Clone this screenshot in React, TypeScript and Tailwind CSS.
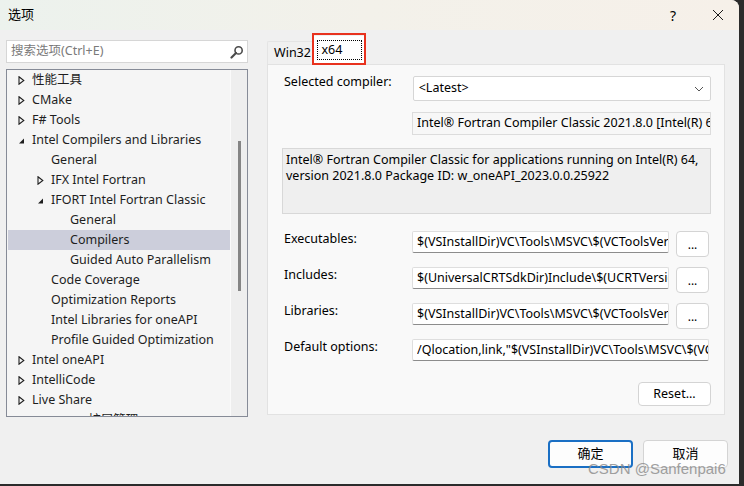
import React from 'react';

type Node = { t: string; lvl: number; ic?: 'c' | 'e'; sel?: boolean };

const tree: Node[] = [
    { t: '性能工具', lvl: 0, ic: 'c' },
    { t: 'CMake', lvl: 0, ic: 'c' },
    { t: 'F# Tools', lvl: 0, ic: 'c' },
    { t: 'Intel Compilers and Libraries', lvl: 0, ic: 'e' },
    { t: 'General', lvl: 1 },
    { t: 'IFX Intel Fortran', lvl: 1, ic: 'c' },
    { t: 'IFORT Intel Fortran Classic', lvl: 1, ic: 'e' },
    { t: 'General', lvl: 2 },
    { t: 'Compilers', lvl: 2, sel: true },
    { t: 'Guided Auto Parallelism', lvl: 2 },
    { t: 'Code Coverage', lvl: 1 },
    { t: 'Optimization Reports', lvl: 1 },
    { t: 'Intel Libraries for oneAPI', lvl: 1 },
    { t: 'Profile Guided Optimization', lvl: 1 },
    { t: 'Intel oneAPI', lvl: 0, ic: 'c' },
    { t: 'IntelliCode', lvl: 0, ic: 'c' },
    { t: 'Live Share', lvl: 0, ic: 'c' },
    { t: 'xxxxxxxx 扩展管理', lvl: 0, ic: 'c' },
];

const font = { fontFamily: '"Noto Sans", "Noto Sans CJK SC", sans-serif' };

function Collapsed() {
    return (
        <svg width="7" height="9" viewBox="0 0 7 9" className="shrink-0">
            <path d="M1 0.8 L5.8 4.5 L1 8.2 Z" fill="none" stroke="#1e1e1e" strokeWidth="1.1" />
        </svg>
    );
}

function Expanded() {
    return (
        <svg width="7" height="9" viewBox="0 0 7 9" className="shrink-0">
            <path d="M6 2.5 L6 7.5 L1 7.5 Z" fill="#1e1e1e" />
        </svg>
    );
}

function TreeRow({ node }: { node: Node }) {
    const pad = node.lvl === 0 ? 'pl-[10px]' : node.lvl === 1 ? 'pl-[29px]' : 'pl-[48px]';
    return (
        <div className={`flex h-[20px] items-center ${pad} ${node.sel ? 'bg-[#cccedb]' : ''}`}>
            <div className="flex w-[14px] items-center">
                {node.ic === 'c' && <Collapsed />}
                {node.ic === 'e' && <Expanded />}
            </div>
            <span className="whitespace-nowrap text-[12.5px] text-[#1e1e1e]">{node.t}</span>
        </div>
    );
}

function TextField({ value, width }: { value: string; width: string }) {
    return (
        <div className={`${width} flex h-[22px] items-center rounded-[2px] border border-[#dedede] border-b-[#8c8c8c] bg-white pl-[4px]`}>
            <span className="block w-full overflow-hidden whitespace-nowrap text-[12.5px] text-black">{value}</span>
        </div>
    );
}

function DotsButton() {
    return (
        <div className="flex h-[26px] w-[33px] items-end justify-center rounded-[4px] border border-[#d4d4d4] bg-white pb-[5px] text-[12px] leading-none text-black">
            ...
        </div>
    );
}

export default function App() {
    return (
        <div className="h-[486px] w-[744px] bg-[#2b2b2b]" style={font}>
            <div className="relative flex h-[484px] w-[739px] flex-col overflow-hidden rounded-tr-[8px] bg-[#f0f0f0]">
                {/* title bar */}
                <div className="flex h-[30px] items-center bg-gradient-to-r from-[#ecf2ed] via-[#f3f1ea] to-[#f6f0e9] pl-[8px]">
                    <span className="text-[13px] text-black">选项</span>
                    <span className="ml-auto text-[14px] text-black">?</span>
                    <svg width="12" height="12" viewBox="0 0 12 12" className="ml-[36px] mr-[15px]">
                        <path d="M1 1 L11 11 M11 1 L1 11" stroke="#1a1a1a" strokeWidth="1" />
                    </svg>
                </div>

                <div className="flex h-[388px]">
                    {/* left column */}
                    <div className="ml-[6px] flex w-[242px] flex-col pt-[10px]">
                        <div className="flex h-[23px] items-center border border-[#d6d6d6] bg-white pl-[4px] pr-[3px]">
                            <span className="text-[12.5px] text-[#7a7a7a]">搜索选项(Ctrl+E)</span>
                            <svg width="14" height="14" viewBox="0 0 14 14" className="ml-auto">
                                <circle cx="8.6" cy="5.4" r="3.6" fill="none" stroke="#4a4a4a" strokeWidth="1.6" />
                                <path d="M6 8 L1.5 12.5" stroke="#4a4a4a" strokeWidth="2.2" strokeLinecap="round" />
                            </svg>
                        </div>
                        <div className="mt-[6px] flex h-[348px] overflow-hidden border border-[#868b97] bg-[#f5f5f5]">
                            <div className="flex-1 overflow-hidden pl-[1px]">
                                {tree.map((n, i) => (
                                    <TreeRow key={i} node={n} />
                                ))}
                            </div>
                            <div className="w-[17px] border-l border-l-[#fafafa] bg-[#eeeeee] pl-[7px] pt-[71px]">
                                <div className="h-[150px] w-[3px] bg-[#858585]" />
                            </div>
                        </div>
                    </div>

                    {/* right column */}
                    <div className="ml-[19px] flex w-[458px] flex-col pt-[6px]">
                        <div className="flex h-[28px] items-end">
                            <div className="flex h-[23px] w-[47px] items-center justify-center rounded-tl-[2px] border-l border-t border-[#e4e4e4] bg-[#f0f0f0] pl-[3px] text-[12.5px] text-black">
                                Win32
                            </div>
                            <div className="relative flex h-[28px] w-[50px] items-center justify-center bg-white">
                                <div className="flex h-[20px] w-[45px] items-center border border-dotted border-black pl-[4px] text-[12.5px] text-black">
                                    x64
                                </div>
                                <div className="absolute left-[-2px] top-[-3px] h-[32px] w-[54px] border-2 border-[#e8321e]" />
                            </div>
                        </div>
                        <div className="flex h-[351px] flex-col border border-[#e2e2e2] bg-[#f9f9f9] pl-[14px] pr-[13px] pt-[11px]">
                            <div className="flex items-start">
                                <span className="-mt-[3px] ml-[2px] w-[129px] text-[12.5px] text-black">Selected compiler:</span>
                                <div className="flex h-[25px] w-[299px] items-center rounded-[2px] border border-[#d6d6d6] bg-white pl-[5px] pr-[6px]">
                                    <span className="text-[12.5px] text-black">&lt;Latest&gt;</span>
                                    <svg width="10" height="6" viewBox="0 0 10 6" className="ml-auto">
                                        <path d="M1 1 L5 5 L9 1" fill="none" stroke="#555" strokeWidth="1" />
                                    </svg>
                                </div>
                            </div>
                            <div className="ml-[130px] mt-[11px] flex h-[23px] w-[299px] items-center border border-[#dcdcdc] bg-[#f7f7f7] pl-[4px]">
                                <span className="block w-full overflow-hidden whitespace-nowrap text-[12.5px] text-black">
                                    Intel® Fortran Compiler Classic 2021.8.0 [Intel(R) 64]
                                </span>
                            </div>
                            <div className="mt-[13px] h-[66px] w-[429px] border border-[#d8d8d8] bg-[#efefef] px-[3px] pt-[3px] text-[12.5px] leading-[16px] text-black">
                                Intel® Fortran Compiler Classic for applications running on Intel(R) 64,
                                <br />
                                version 2021.8.0 Package ID: w_oneAPI_2023.0.0.25922
                            </div>

                            <div className="mt-[17px] flex flex-col gap-[14px]">
                                {[
                                    ['Executables:', '$(VSInstallDir)VC\\Tools\\MSVC\\$(VCToolsVersion)\\bin'],
                                    ['Includes:', '$(UniversalCRTSdkDir)Include\\$(UCRTVersion)\\ucrt'],
                                    ['Libraries:', '$(VSInstallDir)VC\\Tools\\MSVC\\$(VCToolsVersion)\\lib'],
                                ].map(([label, value]) => (
                                    <div key={label} className="flex h-[22px] items-start">
                                        <span className="-mt-[1px] ml-[2px] w-[128px] text-[12.5px] text-black">{label}</span>
                                        <TextField value={value} width="w-[257px]" />
                                        <div className="ml-[7px]">
                                            <DotsButton />
                                        </div>
                                    </div>
                                ))}
                                <div className="flex h-[22px] items-start">
                                    <span className="-mt-[1px] ml-[2px] w-[128px] text-[12.5px] text-black">Default options:</span>
                                    <TextField
                                        value={'/Qlocation,link,"$(VSInstallDir)VC\\Tools\\MSVC\\$(VCToolsVersion)\\bin"'}
                                        width="w-[297px]"
                                    />
                                </div>
                            </div>

                            <div className="mt-[21px] flex justify-end">
                                <div className="flex h-[24px] w-[73px] items-center justify-center rounded-[4px] border border-[#d4d4d4] bg-white text-[12.5px] text-black">
                                    Reset...
                                </div>
                            </div>
                        </div>
                    </div>
                </div>

                {/* bottom buttons */}
                <div className="flex justify-end gap-[10px] pr-[11px] pt-[22px]">
                    <div className="flex h-[28px] w-[85px] items-center justify-center rounded-[4px] border-2 border-[#1a6fc4] bg-[#fdfdfd] text-[13px] text-black">
                        确定
                    </div>
                    <div className="flex h-[28px] w-[85px] items-center justify-center rounded-[4px] border border-[#d4d4d4] bg-[#fdfdfd] text-[13px] text-black">
                        取消
                    </div>
                </div>

                <div
                    className="absolute left-[588px] top-[458px] text-[15px] text-[#8a8a8a] opacity-80"
                    style={{ fontFamily: '"Liberation Sans", Arial, sans-serif' }}
                >
                    CSDN @Sanfenpai6
                </div>
            </div>
        </div>
    );
}
